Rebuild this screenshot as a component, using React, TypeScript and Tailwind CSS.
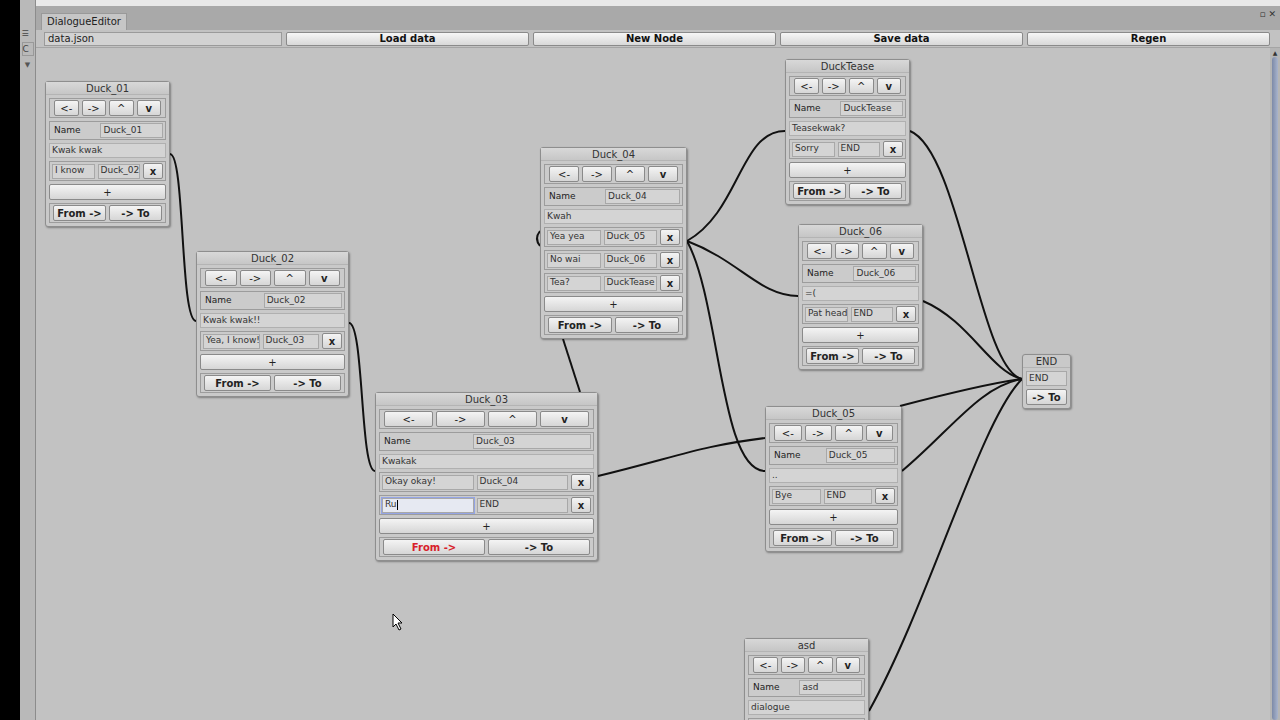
import React from "react";

type Row =
  | { t: "arrows" }
  | { t: "name"; v: string }
  | { t: "text"; v: string }
  | { t: "ans"; a: string; b: string; focus?: boolean }
  | { t: "plus" }
  | { t: "fromto"; red?: boolean };

const btn =
  "flex-1 h-[16px] rounded-[2px] border border-[#8a8a8a] bg-gradient-to-b from-[#f4f4f4] to-[#d6d6d6] flex items-center justify-center text-[10px] text-[#222] whitespace-nowrap";
const field = "h-[15px] border border-[#a8a8a8] bg-[#d4d4d4] px-[2px] text-[9px] text-[#333] flex items-center whitespace-nowrap overflow-hidden";
const box = "border border-[#9c9c9c] bg-[#cbcbcb] p-[1px] px-[2px] flex gap-[3px] items-center";

function NodeRow({ r }: { r: Row }) {
  switch (r.t) {
    case "arrows":
      return (
        <div className={box + " px-[4px] h-[20px]"}>
          <div className={btn}>&lt;-</div>
          <div className={btn}>-&gt;</div>
          <div className={btn}>^</div>
          <div className={btn + " font-bold"}>v</div>
        </div>
      );
    case "name":
      return (
        <div className={box + " h-[19px]"}>
          <div className="flex-1 text-[9px] text-[#222] pl-[2px]">Name</div>
          <div className={field + " flex-[1.3]"}>{r.v}</div>
        </div>
      );
    case "text":
      return <div className={field + " border-[#b0b0b0]"}>{r.v}</div>;
    case "ans":
      return (
        <div className={box + " h-[20px]"}>
          <div
            className={
              field +
              " flex-1 min-w-0 " +
              (r.focus ? "border-[#5b73d8] bg-[#e6e9f2] shadow-[0_0_0_1px_#93a4e6]" : "")
            }
          >
            {r.a}
            {r.focus && <span className="w-px h-[10px] bg-black" />}
          </div>
          <div className={field + " flex-1 min-w-0"}>{r.b}</div>
          <div className={btn + " flex-none w-[20px] font-bold " + (r.focus ? "flex-1" : "")}>x</div>
        </div>
      );
    case "plus":
      return <div className={btn + " flex-none h-[15px] w-full"}>+</div>;
    case "fromto":
      return (
        <div className={box + " px-[3px] h-[20px]"}>
          <div className={btn + " font-bold " + (r.red ? "text-[#d8202a]" : "")}>From -&gt;</div>
          <div className={btn + " font-bold"}>-&gt; To</div>
        </div>
      );
  }
}

function Node({ x, y, w, title, rows }: { x: number; y: number; w: number; title: string; rows: Row[] }) {
  return (
    <div
      className="absolute rounded-[3px] border border-[#8e8e8e] bg-[#c9c9c9] shadow-[1px_1px_2px_rgba(0,0,0,0.35)] flex flex-col gap-[3px] px-[3px] pb-[3px]"
      style={{ left: x, top: y, width: w }}
    >
      <div className="h-[13px] text-center text-[10px] leading-[13px] text-[#333] border-b border-[#b4b4b4] bg-gradient-to-b from-[#d8d8d8] to-[#c6c6c6] -mx-[3px]">
        {title}
      </div>
      {rows.map((r, i) => (
        <NodeRow key={i} r={r} />
      ))}
    </div>
  );
}

const std = (name: string, text: string, ans: { a: string; b: string; focus?: boolean }[], red = false): Row[] => [
  { t: "arrows" },
  { t: "name", v: name },
  { t: "text", v: text },
  ...ans.map((a) => ({ t: "ans" as const, ...a })),
  { t: "plus" },
  { t: "fromto", red },
];

const curves = [
  "M170,153 C185,153 180,320 196,320",
  "M349,322 C364,322 360,470 375,470",
  "M598,475 C680,455 700,445 765,437",
  "M900,405 C950,392 990,382 1022,378",
  "M563,338 L580,391",
  "M687,240 C740,210 740,130 785,130",
  "M687,240 C740,260 760,295 798,295",
  "M687,240 C720,300 720,470 765,470",
  "M910,130 C960,150 980,370 1022,378",
  "M923,300 C970,320 990,370 1022,378",
  "M902,470 C950,430 980,385 1022,378",
  "M869,710 C930,600 980,420 1022,378",
  "M540,245 C536,240 536,235 540,230",
];

export default function App() {
  return (
    <div
      className="relative w-[1280px] h-[720px] overflow-hidden bg-black flex"
      style={{ fontFamily: '"DejaVu Sans", "Liberation Sans", sans-serif' }}
    >
      <div className="w-[20px] bg-black" />
      <div className="w-[16px] bg-[#b9b9b9] border-r border-[#8c8c8c] flex flex-col pt-[28px] gap-[4px] items-center">
        <div className="w-[12px] h-[10px] text-[8px] text-[#444]">☰</div>
        <div className="w-[12px] h-[14px] text-[9px] text-[#444] border border-[#999]">C</div>
        <div className="text-[7px] text-[#555]">▼</div>
      </div>
      <div className="flex-1 flex flex-col bg-[#c2c2c2] border-t-[6px] border-[#e9e9e9]">
        <div className="h-[24px] bg-[#a9a9a9] flex items-end pl-[5px] relative">
          <div className="h-[17px] px-[5px] bg-[#c6c6c6] border border-[#999] border-b-0 text-[10px] text-[#222] leading-[16px]">
            DialogueEditor
          </div>
          <div className="absolute right-[4px] top-[2px] text-[9px] text-[#333]">▫ ✕</div>
        </div>
        <div className="h-[18px] flex items-center gap-[4px] px-[8px] bg-[#c2c2c2] border-b border-[#a5a5a5] pr-[10px]">
          <div className="w-[238px] h-[14px] border border-[#9a9a9a] bg-[#d2d2d2] text-[10px] px-[3px] leading-[12px] text-[#222]">data.json</div>
          {["Load data", "New Node", "Save data", "Regen"].map((t) => (
            <div
              key={t}
              className="flex-1 h-[14px] rounded-[2px] border border-[#8a8a8a] bg-gradient-to-b from-[#f6f6f6] to-[#d8d8d8] text-[10px] font-bold text-center leading-[12px] text-[#111]"
            >
              {t}
            </div>
          ))}
        </div>
        <div className="flex-1 flex">
          <div className="relative flex-1">
            <svg className="absolute inset-0" width="1244" height="675" viewBox="36 47 1244 675">
              {curves.map((d, i) => (
                <path key={i} d={d} fill="none" stroke="#111" strokeWidth="2" />
              ))}
            </svg>
            <div className="absolute" style={{ left: -36, top: -47 }}>
              <Node x={45} y={80} w={125} title="Duck_01" rows={std("Duck_01", "Kwak kwak", [{ a: "I know", b: "Duck_02" }])} />
              <Node x={196} y={250} w={153} title="Duck_02" rows={std("Duck_02", "Kwak kwak!!", [{ a: "Yea, I know!", b: "Duck_03" }])} />
              <Node
                x={375}
                y={391}
                w={223}
                title="Duck_03"
                rows={std("Duck_03", "Kwakak", [{ a: "Okay okay!", b: "Duck_04" }, { a: "Ru", b: "END", focus: true }], true)}
              />
              <Node
                x={540}
                y={146}
                w={147}
                title="Duck_04"
                rows={std("Duck_04", "Kwah", [
                  { a: "Yea yea", b: "Duck_05" },
                  { a: "No wai", b: "Duck_06" },
                  { a: "Tea?", b: "DuckTease" },
                ])}
              />
              <Node x={785} y={58} w={125} title="DuckTease" rows={std("DuckTease", "Teasekwak?", [{ a: "Sorry", b: "END" }])} />
              <Node x={798} y={223} w={125} title="Duck_06" rows={std("Duck_06", "=(", [{ a: "Pat head", b: "END" }])} />
              <Node x={765} y={405} w={137} title="Duck_05" rows={std("Duck_05", "..", [{ a: "Bye", b: "END" }])} />
              <Node x={744} y={637} w={125} title="asd" rows={std("asd", "dialogue", [{ a: "", b: "" }])} />
              <div
                className="absolute rounded-[3px] border border-[#8e8e8e] bg-[#c9c9c9] shadow-[1px_1px_2px_rgba(0,0,0,0.35)] flex flex-col gap-[3px] px-[3px] pb-[3px] w-[49px]"
                style={{ left: 1022, top: 353 }}
              >
                <div className="h-[13px] text-center text-[10px] leading-[13px] text-[#333] border-b border-[#b4b4b4] -mx-[3px]">END</div>
                <div className={field}>END</div>
                <div className={btn + " flex-none font-bold"}>-&gt; To</div>
              </div>
            </div>
            <div className="absolute left-[356px] top-[565px]">
              <svg width="12" height="18" viewBox="0 0 12 18">
                <path d="M1 1 L1 14 L4 11 L7 17 L9 16 L6 10 L10 10 Z" fill="white" stroke="black" strokeWidth="1" />
              </svg>
            </div>
          </div>
          <div className="w-[10px] bg-[#b5b5b5] flex flex-col items-center">
            <div className="text-[6px] text-[#333]">▲</div>
            <div className="flex-1 w-[6px] rounded bg-gradient-to-r from-[#7d8aa8] to-[#a9b4cc]" />
          </div>
        </div>
      </div>
    </div>
  );
}
